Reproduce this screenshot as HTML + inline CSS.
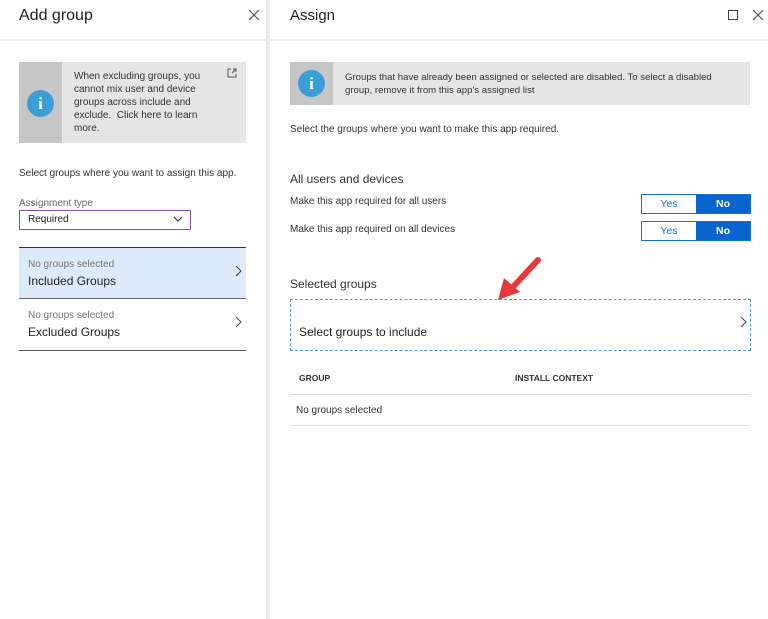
<!DOCTYPE html>
<html><head><meta charset="utf-8"><style>
*{margin:0;padding:0;box-sizing:border-box}
body{width:768px;height:619px;background:#fff;font-family:"Liberation Sans",sans-serif;color:#222;position:relative;overflow:hidden}
.a{position:absolute;white-space:nowrap}
.s{font-size:10px;color:#333}
</style></head><body>
<div class="a" style="left:266px;top:0;width:4px;height:619px;background:linear-gradient(to right,#e4e4e4,#f4f4f4)"></div>
<div class="a" style="left:0;top:39px;width:266px;height:2px;background:#ececec"></div>
<div class="a" style="left:270px;top:39px;width:498px;height:2px;background:#ececec"></div>
<div class="a" style="left:19px;top:7px;font-size:16px;color:#222">Add group</div>
<svg class="a" style="left:248px;top:9px" width="12" height="12"><path d="M1 1L11 11M11 1L1 11" stroke="#555" stroke-width="1.2"/></svg>

<div class="a" style="left:19px;top:62px;width:227px;height:81px;background:#e5e5e5"></div>
<div class="a" style="left:19px;top:62px;width:43px;height:81px;background:#c6c6c6"></div>
<div class="a" style="left:27px;top:90px;width:27px;height:27px;border-radius:50%;background:#3a9fd6;color:#fff;font:bold 17px 'Liberation Serif',serif;text-align:center;line-height:27px">i</div>
<div class="a s" style="left:74px;top:70px;line-height:13px">When excluding groups, you<br>cannot mix user and device<br>groups across include and<br>exclude.&nbsp; Click here to learn<br>more.</div>
<svg class="a" style="left:227px;top:68px" width="10" height="10"><path d="M4 1H1V9H9V6M5 5L9 1M6 1H9V4" stroke="#555" fill="none" stroke-width="1"/></svg>

<div class="a s" style="left:19px;top:168px">Select groups where you want to assign this app.</div>
<div class="a s" style="left:19px;top:198px;color:#666">Assignment type</div>
<div class="a" style="left:19px;top:210px;width:172px;height:20px;border:1px solid #8a4aa0"></div>
<div class="a s" style="left:28px;top:214px;color:#222">Required</div>
<svg class="a" style="left:173px;top:216px" width="10" height="7"><path d="M1 1L5 5L9 1" stroke="#333" fill="none" stroke-width="1.2"/></svg>

<div class="a" style="left:19px;top:247px;width:227px;height:52px;background:#dcebfb;border-top:1px solid #333;border-bottom:1px solid #666"></div>
<div class="a s" style="left:28px;top:259px;color:#777">No groups selected</div>
<div class="a" style="left:28px;top:274px;font-size:12px;color:#222">Included Groups</div>
<svg class="a" style="left:235px;top:265px" width="7" height="12"><path d="M1 1L6 6L1 11" stroke="#444" fill="none" stroke-width="1"/></svg>
<div class="a" style="left:19px;top:350px;width:227px;height:1px;background:#555"></div>
<div class="a s" style="left:28px;top:310px;color:#777">No groups selected</div>
<div class="a" style="left:28px;top:325px;font-size:12px;color:#222">Excluded Groups</div>
<svg class="a" style="left:235px;top:316px" width="7" height="12"><path d="M1 1L6 6L1 11" stroke="#444" fill="none" stroke-width="1"/></svg>

<div class="a" style="left:290px;top:7px;font-size:15px;color:#222">Assign</div>
<div class="a" style="left:728px;top:10px;width:10px;height:10px;border:1px solid #444"></div>
<svg class="a" style="left:752px;top:9px" width="12" height="12"><path d="M1 1L11 11M11 1L1 11" stroke="#555" stroke-width="1.2"/></svg>

<div class="a" style="left:290px;top:62px;width:460px;height:43px;background:#e5e5e5"></div>
<div class="a" style="left:290px;top:62px;width:43px;height:43px;background:#c6c6c6"></div>
<div class="a" style="left:298px;top:70px;width:27px;height:27px;border-radius:50%;background:#3a9fd6;color:#fff;font:bold 17px 'Liberation Serif',serif;text-align:center;line-height:27px">i</div>
<div class="a" style="left:345px;top:71px;line-height:13px;font-size:9.6px;color:#333">Groups that have already been assigned or selected are disabled. To select a disabled<br>group, remove it from this app's assigned list</div>

<div class="a s" style="left:290px;top:124px">Select the groups where you want to make this app required.</div>
<div class="a" style="left:290px;top:172px;font-size:12px;color:#333">All users and devices</div>
<div class="a s" style="left:290px;top:196px">Make this app required for all users</div>
<div class="a s" style="left:290px;top:224px">Make this app required on all devices</div>

<div class="a" style="left:641px;top:194px;width:110px;height:20px;border:1px solid #1a6fd0;display:flex"><div style="width:54px;background:#fff;color:#1a6fd0;font-size:10.5px;text-align:center;line-height:18px">Yes</div><div style="flex:1;background:#0a64d0;color:#fff;font-size:10.5px;font-weight:bold;text-align:center;line-height:18px">No</div></div>
<div class="a" style="left:641px;top:221px;width:110px;height:20px;border:1px solid #1a6fd0;display:flex"><div style="width:54px;background:#fff;color:#1a6fd0;font-size:10.5px;text-align:center;line-height:18px">Yes</div><div style="flex:1;background:#0a64d0;color:#fff;font-size:10.5px;font-weight:bold;text-align:center;line-height:18px">No</div></div>

<div class="a" style="left:290px;top:277px;font-size:12px;color:#333">Selected groups</div>
<div class="a" style="left:290px;top:299px;width:461px;height:52px;border:1px dashed #4aa0c0"></div>
<div class="a" style="left:299px;top:325px;font-size:12px;color:#222">Select groups to include</div>
<svg class="a" style="left:740px;top:316px" width="7" height="12"><path d="M1 1L6 6L1 11" stroke="#444" fill="none" stroke-width="1"/></svg>

<div class="a" style="left:299px;top:373px;font-size:8.5px;font-weight:bold;color:#333">GROUP</div>
<div class="a" style="left:515px;top:373px;font-size:8.5px;font-weight:bold;color:#333">INSTALL CONTEXT</div>
<div class="a" style="left:290px;top:394px;width:460px;height:1px;background:#ddd"></div>
<div class="a s" style="left:296px;top:405px">No groups selected</div>
<div class="a" style="left:290px;top:425px;width:460px;height:1px;background:#ddd"></div>

<svg class="a" style="left:490px;top:252px" width="60" height="55"><path d="M48 8L22 36" stroke="#e8383c" stroke-width="6" stroke-linecap="round"/><path d="M8 48L14 26L30 40Z" fill="#e8383c"/></svg>
</body></html>
